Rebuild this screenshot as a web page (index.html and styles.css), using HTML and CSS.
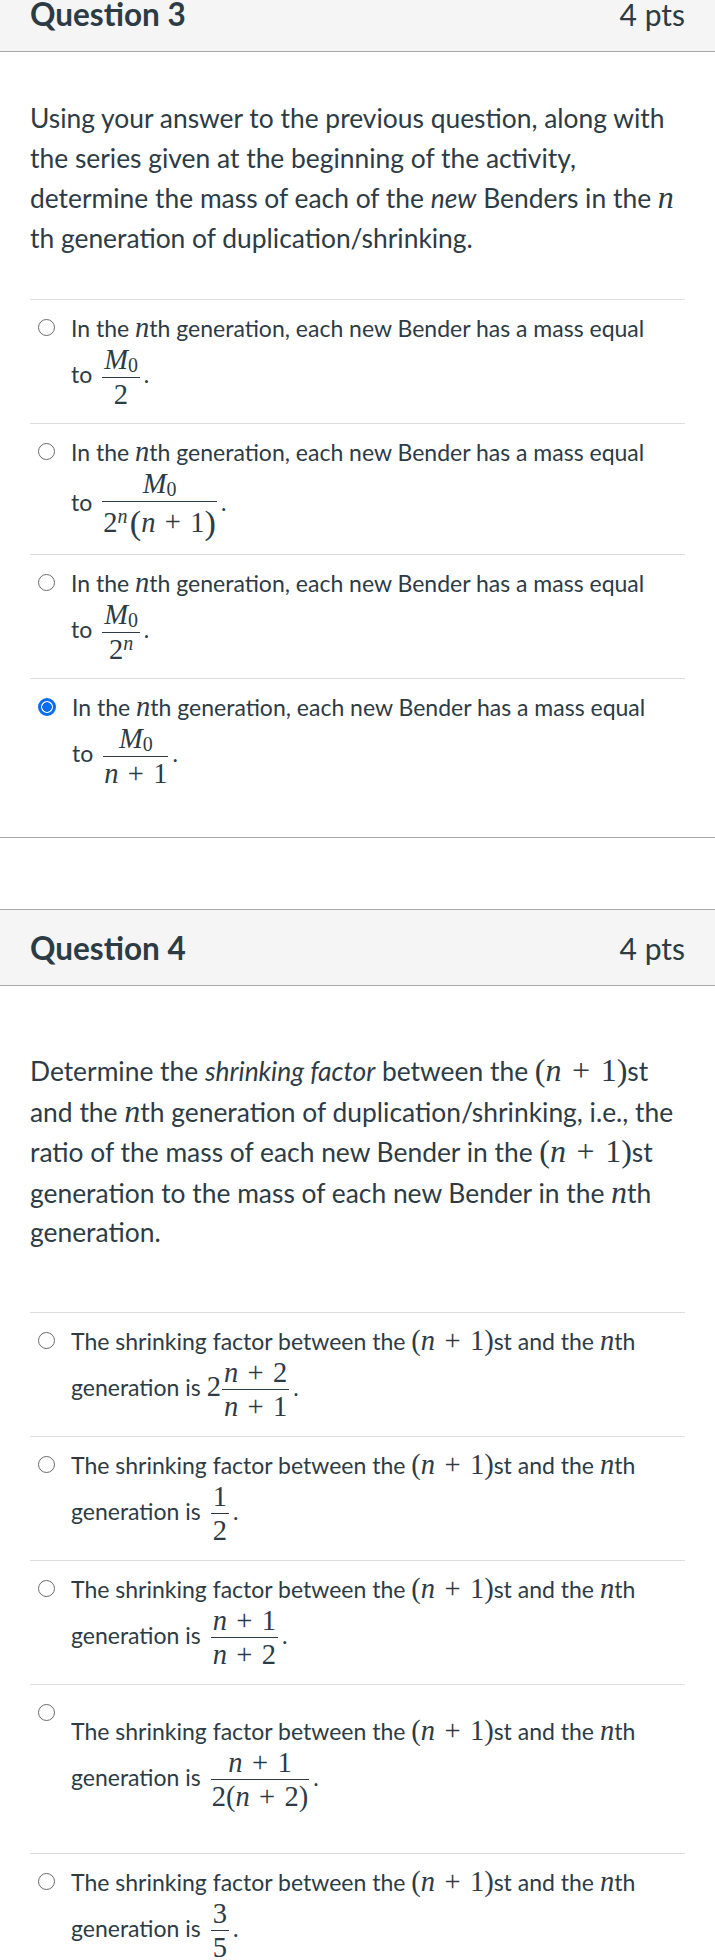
FILE: index.html
```html
<!DOCTYPE html>
<html>
<head>
    <link rel="stylesheet" href="styles.css">
</head>
<body>
    <div class="quiz">

        <div class="question">
            <div class="question-header">
                <span class="question-name">Question 3</span>
                <span class="question-points">4 pts</span>
            </div>
            <div class="question-text">
                Using your answer to the previous question, along with<br>
                the series given at the beginning of the activity,<br>
                determine the mass of each of the <em>new</em> Benders in the <span class="m"><i>n</i></span><br>
                th generation of duplication/shrinking.
            </div>
            <div class="answers">
                <div class="option">
                    <span class="radio"></span>
                    <div class="opt-text">
                        In the <span class="m"><i>n</i></span>th generation, each new Bender has a mass equal<br>
                        to <span class="frac"><span class="num"><i>M</i><sub>0</sub></span><span class="den">2</span></span>.
                    </div>
                </div>
                <div class="option">
                    <span class="radio"></span>
                    <div class="opt-text">
                        In the <span class="m"><i>n</i></span>th generation, each new Bender has a mass equal<br>
                        to <span class="frac"><span class="num"><i>M</i><sub>0</sub></span><span class="den">2<sup><i>n</i></sup>&#8202;<span class="paren">(</span><i>n</i><span class="op">+</span>1<span class="paren">)</span></span></span>.
                    </div>
                </div>
                <div class="option">
                    <span class="radio"></span>
                    <div class="opt-text">
                        In the <span class="m"><i>n</i></span>th generation, each new Bender has a mass equal<br>
                        to <span class="frac"><span class="num"><i>M</i><sub>0</sub></span><span class="den">2<sup><i>n</i></sup></span></span>.
                    </div>
                </div>
                <div class="option">
                    <span class="radio checked"></span>
                    <div class="opt-text">
                        In the <span class="m"><i>n</i></span>th generation, each new Bender has a mass equal<br>
                        to <span class="frac"><span class="num"><i>M</i><sub>0</sub></span><span class="den"><i>n</i><span class="op">+</span>1</span></span>.
                    </div>
                </div>
            </div>
        </div>

        <div class="question">
            <div class="question-header">
                <span class="question-name">Question 4</span>
                <span class="question-points">4 pts</span>
            </div>
            <div class="question-text spaced">
                Determine the <em>shrinking factor</em> between the <span class="m">(<i>n</i><span class="op">+</span>1)</span>st<br>
                and the <span class="m"><i>n</i></span>th generation of duplication/shrinking, i.e., the<br>
                ratio of the mass of each new Bender in the <span class="m">(<i>n</i><span class="op">+</span>1)</span>st<br>
                generation to the mass of each new Bender in the <span class="m"><i>n</i></span>th<br>
                generation.
            </div>
            <div class="answers">
                <div class="option">
                    <span class="radio"></span>
                    <div class="opt-text">
                        The shrinking factor between the <span class="m">(<i>n</i><span class="op">+</span>1)</span>st and the <span class="m"><i>n</i></span>th<br>
                        generation is <span class="m">2</span><span class="frac tight"><span class="num"><i>n</i><span class="op">+</span>2</span><span class="den"><i>n</i><span class="op">+</span>1</span></span>.
                    </div>
                </div>
                <div class="option">
                    <span class="radio"></span>
                    <div class="opt-text">
                        The shrinking factor between the <span class="m">(<i>n</i><span class="op">+</span>1)</span>st and the <span class="m"><i>n</i></span>th<br>
                        generation is <span class="frac"><span class="num">1</span><span class="den">2</span></span>.
                    </div>
                </div>
                <div class="option">
                    <span class="radio"></span>
                    <div class="opt-text">
                        The shrinking factor between the <span class="m">(<i>n</i><span class="op">+</span>1)</span>st and the <span class="m"><i>n</i></span>th<br>
                        generation is <span class="frac"><span class="num"><i>n</i><span class="op">+</span>1</span><span class="den"><i>n</i><span class="op">+</span>2</span></span>.
                    </div>
                </div>
                <div class="option stacked">
                    <span class="radio"></span>
                    <div class="opt-text">
                        The shrinking factor between the <span class="m">(<i>n</i><span class="op">+</span>1)</span>st and the <span class="m"><i>n</i></span>th<br>
                        generation is <span class="frac"><span class="num"><i>n</i><span class="op">+</span>1</span><span class="den">2(<i>n</i><span class="op">+</span>2)</span></span>.
                    </div>
                </div>
                <div class="option">
                    <span class="radio"></span>
                    <div class="opt-text">
                        The shrinking factor between the <span class="m">(<i>n</i><span class="op">+</span>1)</span>st and the <span class="m"><i>n</i></span>th<br>
                        generation is <span class="frac"><span class="num">3</span><span class="den">5</span></span>.
                    </div>
                </div>
            </div>
        </div>

    </div>
</body>
</html>
```

FILE: styles.css
```css
body {
    margin: 0;
    font-family: Lato, "Open Sans", sans-serif;
    color: #2d3b45;
    background: #fff;
}

.quiz {
    margin-top: -25px; /* page is scrolled a little */
}

.question {
    border-bottom: 1px solid #a8a8a8;
    padding-bottom: 35px;
    margin-bottom: 71px;
}

.question-header {
    height: 75px;
    padding: 0 30px;
    background-color: #f5f5f5;
    border-top: 1px solid #a8a8a8;
    border-bottom: 1px solid #a8a8a8;
    display: flex;
    align-items: center;
    justify-content: space-between;
}

.question-name {
    font-size: 31.5px;
    font-weight: bold;
}

.question-points {
    font-size: 30px;
    font-weight: normal;
}

.question-text {
    font-size: 26.4px;
    line-height: 39.5px;
    padding: 47px 30px 41px;
    white-space: nowrap;
}

.question-text.spaced {
    padding-top: 65px;
    padding-bottom: 59px;
}

.question-text .m {
    font-size: 32px;
}

.answers {
    margin: 0 30px;
}

.option {
    border-top: 1px solid #dedede;
    padding: 10px 0 14px;
    display: flex;
    align-items: flex-start;
    font-size: 23px;
    line-height: 36px;
    white-space: nowrap;
}

.radio {
    flex: none;
    width: 15px;
    height: 15px;
    margin: 9px 16px 0 8px;
    border: 1.5px solid #6a6a6a;
    border-radius: 50%;
}

.radio.checked {
    width: 12px;
    height: 12px;
    border: 3px solid #0b6cf0;
    background: radial-gradient(circle, #0b6cf0 0, #0b6cf0 4.5px, #fff 5px);
}

.option.stacked .opt-text {
    padding-top: 18px;
    padding-bottom: 27px;
}

/* math */
.m, .frac {
    font-family: "Liberation Serif", "DejaVu Serif", serif;
    font-size: 28.5px;
}

.m i, .frac i {
    font-style: italic;
}

.op {
    padding: 0 0.33em;
}

.frac {
    display: inline-flex;
    flex-direction: column;
    vertical-align: middle;
    margin: 0 4px;
    line-height: 1;
}

.frac.tight {
    margin-left: 1px;
}

.frac .num {
    text-align: center;
    padding: 0 2px 2px;
    border-bottom: 1.5px solid #2d3b45;
}

.frac .den {
    text-align: center;
    padding: 3px 1px 0;
}

.frac sub {
    font-size: 0.7em;
    line-height: 0;
    vertical-align: -0.15em;
}

.frac sup {
    font-size: 0.7em;
    line-height: 0;
    vertical-align: 0.45em;
}

.paren {
    font-size: 1.2em;
    line-height: 1.04;
    vertical-align: -0.06em;
}
```
